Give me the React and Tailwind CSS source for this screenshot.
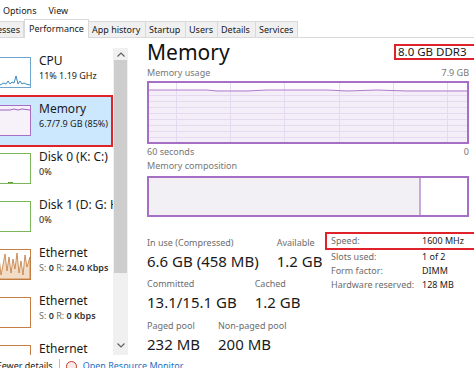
import React from "react";

const CPU_BLUE = "#6ea6cf";
const MEM_PURPLE = "#a56fc6";
const DISK_GREEN = "#7db659";
const NET_ORANGE = "#c57f44";

const CpuThumb = () => (
  <svg width="51" height="31" viewBox="0 0 51 31">
    <rect x="0.5" y="0.5" width="50" height="30" fill="#fff" stroke={CPU_BLUE} />
    <path
      d="M1 28 L20 28 L22 27 L24 26 L26 27 L28 24 L30 27 L32 25 L34 26 L36 19 L38 27 L40 24 L42 27 L44 26 L46 27 L50 28"
      fill="none"
      stroke="#3b8ac2"
      strokeWidth="1"
    />
  </svg>
);

const MemThumb = () => (
  <svg width="51" height="31" viewBox="0 0 51 31">
    <rect x="0.5" y="0.5" width="50" height="30" fill="#f7f2fa" stroke={MEM_PURPLE} />
    <path d="M1 5 L30 5 L34 4 L38 5 L42 4 L50 5" fill="none" stroke="#9c63c0" strokeWidth="1" />
  </svg>
);

const DiskThumb = ({ tick }) => (
  <svg width="51" height="31" viewBox="0 0 51 31">
    <rect x="0.5" y="0.5" width="50" height="30" fill="#fff" stroke={DISK_GREEN} />
    {tick && <line x1="28" x2="33" y1="29.5" y2="29.5" stroke="#5a9a30" strokeWidth="1" />}
  </svg>
);

const NetThumb = ({ busy }) => (
  <svg width="51" height="31" viewBox="0 0 51 31">
    <rect x="0.5" y="0.5" width="50" height="30" fill="#fff" stroke={NET_ORANGE} />
    {busy && (
      <path
        d="M1 30 L1 10 L3 20 L5 6 L7 22 L9 18 L11 4 L13 26 L15 12 L17 24 L19 8 L21 26 L23 16 L25 5 L27 22 L29 8 L31 24 L33 10 L35 20 L37 4 L39 24 L41 12 L43 26 L45 6 L47 18 L50 8 L50 30 Z"
        fill="#f3dcc6"
        stroke="#c07a3e"
        strokeWidth="0.8"
      />
    )}
  </svg>
);

const NetSub = ({ r }) => (
  <span>
    <span className="text-[#6d6d6d]">S: </span>
    <span className="font-semibold text-[#333]">0</span>
    <span className="text-[#6d6d6d]"> R: </span>
    <span className="font-semibold text-[#333]">{r}</span>
  </span>
);

const items = [
  { title: "CPU", sub: "11%  1.19 GHz", thumb: <CpuThumb /> },
  { title: "Memory", sub: "6.7/7.9 GB (85%)", thumb: <MemThumb />, selected: true },
  { title: "Disk 0 (K: C:)", sub: "0%", thumb: <DiskThumb tick /> },
  { title: "Disk 1 (D: G: H:)", sub: "0%", thumb: <DiskThumb /> },
  { title: "Ethernet", sub: <NetSub r="24.0 Kbps" />, thumb: <NetThumb busy /> },
  { title: "Ethernet", sub: <NetSub r="0 Kbps" />, thumb: <NetThumb /> },
  { title: "Ethernet", sub: null, thumb: <NetThumb /> },
];

const tabs = [
  { name: "esses", w: "w-[24px] justify-end" },
  { name: "Performance", w: "w-[65px]", active: true },
  { name: "App history", w: "w-[57px]" },
  { name: "Startup", w: "w-[40px]" },
  { name: "Users", w: "w-[32px]" },
  { name: "Details", w: "w-[38px]" },
  { name: "Services", w: "w-[42px]" },
];

const UsageGraph = () => {
  const vlines = [29, 83, 137, 192, 246, 300];
  const hlines = [14, 20, 26, 32, 38, 44, 50, 56];
  return (
    <svg width="322" height="63" viewBox="0 0 322 63" className="block">
      <rect x="0" y="0" width="322" height="63" fill="#fdfbfe" />
      <rect x="1" y="9" width="320" height="53" fill="#f4eef8" />
      {hlines.map((y) => (
        <line key={y} x1="1" x2="321" y1={y + 0.5} y2={y + 0.5} stroke="#e6dbee" />
      ))}
      {vlines.map((x) => (
        <line key={x} x1={x + 0.5} x2={x + 0.5} y1="1" y2="62" stroke="#e6dbee" />
      ))}
      <path
        d="M1 9 L60 9 L70 10 L100 10 L120 9 L180 9 L200 10 L230 9 L260 10 L321 10"
        fill="none"
        stroke="#b07ccf"
        strokeWidth="1"
      />
      <rect x="1" y="1" width="320" height="61" fill="none" stroke={MEM_PURPLE} strokeWidth="2" />
    </svg>
  );
};

const Stat = ({ label, value }) => (
  <div className="flex flex-col whitespace-nowrap">
    <div className="text-[9px] leading-[14px] text-[#6d6d6d]">{label}</div>
    <div className="text-[15px] leading-[23px] text-[#1a1a1a]">{value}</div>
  </div>
);

const Info = ({ label, value }) => (
  <div className="flex h-[14px] items-center whitespace-nowrap text-[9px]">
    <span className="w-[91px] text-[#6d6d6d]">{label}</span>
    <span className="text-[#1a1a1a]">{value}</span>
  </div>
);

export default function App() {
  return (
    <div className="h-[368px] w-[474px] overflow-hidden bg-white font-['Noto_Sans',sans-serif] text-[#1a1a1a]">
      {/* Menu bar */}
      <div className="flex h-[20px] items-center gap-[12px] pl-[3px] text-[9px] leading-none">
        <span>Options</span>
        <span>View</span>
      </div>

      {/* Tabs */}
      <div className="flex h-[18px] items-end border-b border-[#d9d9d9]">
        {tabs.map((t) =>
          t.active ? (
            <div
              key={t.name}
              className={`-mb-px flex h-[19px] items-center border-x border-t border-[#d9d9d9] bg-white px-[4px] text-[9px] ${t.w}`}
            >
              {t.name}
            </div>
          ) : (
            <div
              key={t.name}
              className={`flex h-[16px] items-center whitespace-nowrap border-r border-t border-[#d9d9d9] bg-[#f0f0f0] px-[3px] text-[9px] ${t.w}`}
            >
              {t.name}
            </div>
          )
        )}
      </div>

      {/* Body */}
      <div className="flex h-[317px] overflow-hidden">
        {/* Left list */}
        <div className="flex w-[128px] shrink-0">
          <div className="w-[113px] overflow-hidden pt-[11px]">
            {items.map((it, i) => (
              <div
                key={i}
                className={`flex h-[48px] w-[111px] items-start ${
                  it.selected ? "bg-[#cce8ff] outline-2 outline-[#e0232b]" : ""
                }`}
              >
                <div className="-ml-[20px] mt-[8px] shrink-0">{it.thumb}</div>
                <div className="ml-[8px] mt-[4px] whitespace-nowrap">
                  <div className="text-[12px] leading-[16px]">{it.title}</div>
                  {it.sub && <div className="text-[9px] leading-[14px]">{it.sub}</div>}
                </div>
              </div>
            ))}
          </div>
          {/* Scrollbar */}
          <div className="mt-[10px] flex w-[15px] flex-col bg-[#f0f0f0]">
            <div className="flex h-[12px] items-center justify-center">
              <svg width="8" height="5" viewBox="0 0 8 5">
                <path d="M0.5 4.5 L4 1 L7.5 4.5" fill="none" stroke="#606060" strokeWidth="1.2" />
              </svg>
            </div>
            <div className="mx-px h-[213px] bg-[#cdcdcd]" />
            <div className="flex-1" />
            <div className="flex h-[20px] items-center justify-center">
              <svg width="8" height="5" viewBox="0 0 8 5">
                <path d="M0.5 0.5 L4 4 L7.5 0.5" fill="none" stroke="#606060" strokeWidth="1.2" />
              </svg>
            </div>
          </div>
        </div>

        {/* Right pane */}
        <div className="min-w-0 flex-1 pl-[19px] pr-[5px]">
          <div className="flex items-start justify-between">
            <div className="text-[21px] leading-[28px] text-[#111]">Memory</div>
            <div className="-mr-[10px] mt-[6px] w-[85px] whitespace-nowrap border-2 border-[#e0232b] pl-[2px] text-[11.5px] leading-[12px]">
              8.0 GB DDR3
            </div>
          </div>

          <div className="flex justify-between text-[9px] leading-[14px] text-[#777]">
            <span>Memory usage</span>
            <span>7.9 GB</span>
          </div>
          <div className="mt-px">
            <UsageGraph />
          </div>
          <div className="mt-px flex justify-between text-[9px] leading-[14px] text-[#777]">
            <span>60 seconds</span>
            <span>0</span>
          </div>
          <div className="text-[9px] leading-[14px] text-[#777]">Memory composition</div>
          <div className="mt-[3px] flex h-[41px] border-2 border-[#a56fc6]">
            <div className="w-[272px] border-r-2 border-[#c7a9d8] bg-[#f2f0f4]" />
            <div className="flex-1 bg-white" />
          </div>

          <div className="mt-[15px] flex">
            <div className="flex flex-col pt-[3.5px]">
              <div className="flex gap-[18px]">
                <Stat label="In use (Compressed)" value="6.6 GB (458 MB)" />
                <Stat label="Available" value="1.2 GB" />
              </div>
              <div className="mt-[4.5px] flex gap-[18px]">
                <Stat label="Committed" value="13.1/15.1 GB" />
                <Stat label="Cached" value="1.2 GB" />
              </div>
              <div className="mt-[5px] flex gap-[18px]">
                <Stat label="Paged pool" value="232 MB" />
                <Stat label="Non-paged pool" value="200 MB" />
              </div>
            </div>
            <div className="-mr-[10px] ml-auto w-[154px] shrink-0">
              <div className="border-2 border-[#e0232b] pl-[4px]">
                <Info label="Speed:" value="1600 MHz" />
              </div>
              <div className="pl-[6px]">
                <Info label="Slots used:" value="1 of 2" />
                <Info label="Form factor:" value="DIMM" />
                <Info label="Hardware reserved:" value="128 MB" />
              </div>
            </div>
          </div>
        </div>
      </div>

      {/* Footer */}
      <div className="flex h-[13px] items-start gap-[6px] pt-[4px] text-[9px] leading-[14px]">
        <span className="-ml-[3px] whitespace-nowrap text-[#1a1a1a]">Fewer details</span>
        <span className="h-[14px] w-px bg-[#bbb]" />
        <span className="mt-[2px] h-[11px] w-[11px] shrink-0 rounded-full border border-[#c0392b] bg-[#fbe9e7]" />
        <span className="whitespace-nowrap text-[#1e6fc4]">Open Resource Monitor</span>
      </div>
    </div>
  );
}
